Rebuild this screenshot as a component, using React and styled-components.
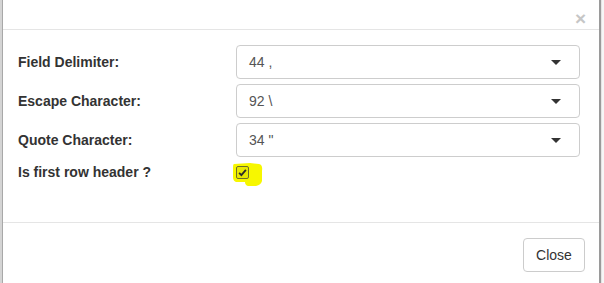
import styled, { createGlobalStyle } from 'styled-components'

const GlobalStyle = createGlobalStyle`
   html, body {
      margin: 0;
      padding: 0;
      background: #e2e2e2;
      font-family: 'Liberation Sans', Arial, sans-serif;
      overflow: hidden;
   }
`

const rows = [
   { label: 'Field Delimiter:', value: '44 ,' },
   { label: 'Escape Character:', value: '92 \\' },
   { label: 'Quote Character:', value: '34 "' },
]

function App() {
   return (
      <Page>
         <GlobalStyle />
         <Modal>
            <Header>
               <CloseX>×</CloseX>
            </Header>
            <Body>
               {rows.map((r) => (
                  <Row key={r.label}>
                     <Label>{r.label}</Label>
                     <Select>
                        <span>{r.value}</span>
                        <Caret />
                     </Select>
                  </Row>
               ))}
               <CheckRow>
                  <Label>Is first row header ?</Label>
                  <CheckWrap>
                     <Highlight viewBox="0 0 31 24" width="31" height="24">
                        <path
                           d="M2 1 L18 0 L27 1 Q31 2 30 8 L30 18 Q29 22 24 23 L16 23 Q13 22 13 19 L4 19 Q1 18 1 14 L1 4 Q1 1 2 1 Z"
                           fill="#f7f700"
                        />
                     </Highlight>
                     <Check>
                        <svg viewBox="0 0 12 12" width="9" height="9">
                           <path
                              d="M1.5 6.5 L4.5 9.5 L10.5 2.5"
                              stroke="#2b2b2b"
                              strokeWidth="2.4"
                              fill="none"
                           />
                        </svg>
                     </Check>
                  </CheckWrap>
               </CheckRow>
            </Body>
            <Footer>
               <Button>Close</Button>
            </Footer>
         </Modal>
      </Page>
   )
}

export default App

const Page = styled.div`
   width: 604px;
   height: 283px;
   overflow: hidden;
   padding-left: 2px;
   box-sizing: border-box;
   background: linear-gradient(to right, #d4d4d4 0, #d4d4d4 601px, #f6f6f6 602px);
`
const Modal = styled.div`
   width: 599px;
   height: 283px;
   background: #fff;
   border-left: 1px solid #a8a8a8;
   border-right: 2px solid #9a9a9a;
   box-sizing: border-box;
   display: flex;
   flex-direction: column;
`
const Header = styled.div`
   height: 29px;
   border-bottom: 1px solid #e5e5e5;
   display: flex;
   justify-content: flex-end;
   align-items: flex-end;
   padding-right: 13px;
`
const CloseX = styled.span`
   font-size: 19px;
   font-weight: bold;
   line-height: 19px;
   color: #c6c6c6;
   margin-bottom: 1px;
`
const Body = styled.div`
   padding: 15px 19px 0 15px;
   height: 193px;
   box-sizing: border-box;
   border-bottom: 1px solid #e5e5e5;
   display: flex;
   flex-direction: column;
   gap: 5px;
`
const Row = styled.div`
   display: grid;
   grid-template-columns: 218px 1fr;
   align-items: center;
`
const Label = styled.div`
   font-size: 14px;
   font-weight: bold;
   color: #333;
`
const Select = styled.div`
   height: 34px;
   box-sizing: border-box;
   border: 1px solid #cdcdcd;
   border-radius: 4px;
   display: flex;
   align-items: center;
   justify-content: space-between;
   padding: 0 18px 0 12px;
   font-size: 14px;
   color: #555;
`
const Caret = styled.span`
   width: 0;
   height: 0;
   border-left: 5px solid transparent;
   border-right: 5px solid transparent;
   border-top: 5px solid #333;
`
const CheckRow = styled.div`
   display: grid;
   grid-template-columns: 218px 1fr;
   align-items: center;
   height: 22px;
   margin-top: -1px;
`
const CheckWrap = styled.div`
   position: relative;
   width: 13px;
   height: 13px;
`
const Highlight = styled.svg`
   position: absolute;
   left: -4px;
   top: -3px;
`
const Check = styled.div`
   position: absolute;
   left: 0;
   top: 0;
   width: 11px;
   height: 11px;
   border: 1px solid #6e6e28;
   border-radius: 2px;
   background: #e8e800;
   display: flex;
   align-items: center;
   justify-content: center;
`
const Footer = styled.div`
   display: flex;
   justify-content: flex-end;
   padding: 15px 14px 0 0;
`
const Button = styled.button`
   height: 34px;
   width: 62px;
   border: 1px solid #ccc;
   border-radius: 4px;
   background: #fff;
   font-family: 'Liberation Sans', Arial, sans-serif;
   font-size: 14px;
   color: #333;
   padding: 0;
`
